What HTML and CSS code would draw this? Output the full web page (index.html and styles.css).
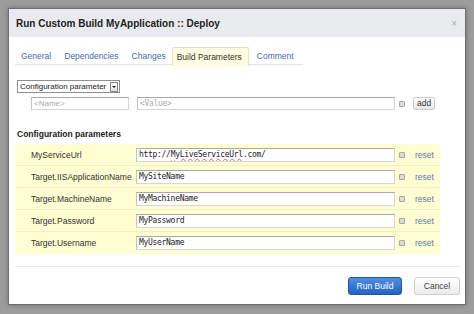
FILE: index.html
```html
<!DOCTYPE html>
<html lang="en">
  <head>
    <meta charset="UTF-8" />
    <title>Run Custom Build</title>
    <link rel="stylesheet" href="styles.css">
  </head>
  <body>
    <div class="backdrop">
      <div class="dialog">
        <div class="dialog-head">
          <span class="dialog-title">Run Custom Build MyApplication :: Deploy</span>
          <span class="close">&times;</span>
        </div>
        <div class="dialog-body">
          <ul class="tabs">
            <li>General</li>
            <li>Dependencies</li>
            <li>Changes</li>
            <li class="active">Build Parameters</li>
            <li>Comment</li>
          </ul>

          <div class="kind">
            <span class="select">Configuration parameter<span class="arrow"></span></span>
          </div>
          <div class="new-param">
            <span class="field name-field placeholder">&lt;Name&gt;</span>
            <span class="field value-field placeholder mono">&lt;Value&gt;</span>
            <span class="edit-icon"></span>
            <span class="btn-add">add</span>
          </div>

          <div class="section-title">Configuration parameters</div>
          <div class="params">
            <div class="param">
              <span class="param-name">MyServiceUrl</span>
              <span class="field value-field mono">http://<u>MyLiveServiceUrl</u>.com/</span>
              <span class="edit-icon"></span>
              <span class="reset">reset</span>
            </div>
            <div class="param">
              <span class="param-name">Target.IISApplicationName</span>
              <span class="field value-field mono">MySiteName</span>
              <span class="edit-icon"></span>
              <span class="reset">reset</span>
            </div>
            <div class="param">
              <span class="param-name">Target.MachineName</span>
              <span class="field value-field mono">MyMachineName</span>
              <span class="edit-icon"></span>
              <span class="reset">reset</span>
            </div>
            <div class="param">
              <span class="param-name">Target.Password</span>
              <span class="field value-field mono">MyPassword</span>
              <span class="edit-icon"></span>
              <span class="reset">reset</span>
            </div>
            <div class="param">
              <span class="param-name">Target.Username</span>
              <span class="field value-field mono">MyUserName</span>
              <span class="edit-icon"></span>
              <span class="reset">reset</span>
            </div>
          </div>
        </div>
        <div class="dialog-foot">
          <span class="btn btn-run">Run Build</span>
          <span class="btn btn-cancel">Cancel</span>
        </div>
      </div>
    </div>
  </body>
</html>
```

FILE: styles.css
```css
body {
  margin: 0;
  background: #9d9d9d;
  font-family: "Liberation Sans", Arial, sans-serif;
  font-size: 8.5px;
  color: #333;
}
.backdrop {
  height: 314px;
  padding: 8px;
  box-sizing: border-box;
}
.dialog {
  width: 458px;
  height: 297px;
  background: white;
  border: 1px solid #6f6f6f;
  box-sizing: border-box;
  box-shadow: 0 0 5px rgba(0, 0, 0, 0.3);
  display: flex;
  flex-direction: column;
}
.dialog-head {
  height: 28px;
  flex: none;
  background: #e9eaee;
  display: flex;
  align-items: center;
  justify-content: space-between;
  padding: 0 8px 0 7px;
}
.dialog-title {
  font-weight: bold;
  font-size: 10px;
  color: #222;
}
.close {
  color: #b0b0b0;
  font-size: 10px;
}
.dialog-body {
  padding: 10px 6px 0 6px;
  flex: 1;
}

/* tabs */
.tabs {
  list-style: none;
  margin: 0;
  padding: 0;
  display: flex;
  width: 288px;
  height: 17px;
  border-bottom: 1px solid #e2e2e2;
}
.tabs li {
  padding: 4px 6px 0 6px;
  margin-right: 1px;
  color: #4a6aa8;
  line-height: 11px;
  white-space: nowrap;
}
.tabs li.active {
  background: #fffce0;
  border: 1px solid #e6e3c2;
  border-bottom: none;
  border-radius: 2px 2px 0 0;
  color: #333;
  height: 14px;
  padding: 4px 6px 0 4px;
  margin: 0 2px 0 -1px;
}

/* new parameter */
.kind {
  margin-top: 15px;
  padding-left: 2px;
  height: 13px;
}
.select {
  display: inline-flex;
  align-items: center;
  height: 11px;
  border: 1px solid #8f8f8f;
  padding: 0 0 0 2px;
  font-size: 8px;
  color: #222;
  line-height: 11px;
}
.arrow {
  width: 6px;
  height: 8px;
  margin: 0 1px 0 4px;
  border: 1px solid #888;
  background: linear-gradient(#fff, #ddd);
  position: relative;
}
.arrow::after {
  content: "";
  position: absolute;
  left: 1px;
  top: 3px;
  border-left: 2px solid transparent;
  border-right: 2px solid transparent;
  border-top: 2px solid #222;
}

.new-param {
  display: flex;
  align-items: center;
  margin-top: 4px;
  padding-left: 16px;
}
.field {
  display: block;
  height: 11px;
  border: 1px solid #d6d6d6;
  border-top-color: #a9a9a9;
  border-left-color: #c4c4c4;
  background: white;
  font-size: 8px;
  line-height: 11px;
  padding: 0 2px;
  white-space: nowrap;
  overflow: hidden;
}
.mono {
  font-family: "DejaVu Sans Mono", "Liberation Mono", monospace;
  font-size: 8px;
  letter-spacing: -0.3px;
  color: #222;
}
.mono u {
  text-decoration: underline wavy #d66;
  text-decoration-thickness: 1px;
  text-underline-offset: 1px;
}
.placeholder {
  color: #aaa;
}
.name-field {
  width: 92px;
}
.value-field {
  width: 252px;
  margin-left: 8px;
}
.edit-icon {
  width: 4px;
  height: 4px;
  border: 1px solid #a5a5a5;
  border-radius: 1px;
  background: #dedede;
  margin-left: 4px;
}
.btn-add {
  margin-left: 8px;
  height: 11px;
  line-height: 11px;
  padding: 0 3px;
  border: 1px solid #ccc;
  border-radius: 2px;
  background: linear-gradient(#fff, #e6e6e6);
  font-size: 8.5px;
  color: #333;
}

/* existing parameters */
.section-title {
  margin-top: 18px;
  padding-left: 2px;
  font-weight: bold;
  font-size: 8.5px;
  line-height: 12px;
  color: #222;
}
.params {
  margin-top: 4px;
  width: 425px;
  background: #fffdd2;
}
.param {
  display: flex;
  align-items: center;
  height: 22px;
  border-bottom: 1px solid #f3efc6;
  box-sizing: border-box;
}
.param:last-child {
  border-bottom: none;
}
.param-name {
  width: 105px;
  padding-left: 16px;
  font-size: 8.5px;
  color: #333;
  white-space: nowrap;
}
.param .field {
  height: 12px;
  line-height: 12px;
}
.param .value-field {
  width: 253px;
  margin-left: 0;
}
.reset {
  margin-left: 10px;
  color: #5a7db0;
  font-size: 8.5px;
}

/* footer */
.dialog-foot {
  flex: none;
  margin: 0 5px 0 6px;
  border-top: 1px solid #e6e6e6;
  height: 37px;
  display: flex;
  justify-content: flex-end;
  align-items: center;
  padding-right: 0;
}
.btn {
  height: 18px;
  line-height: 16px;
  border-radius: 3px;
  font-size: 8.5px;
  text-align: center;
  box-sizing: border-box;
}
.btn-run {
  width: 54px;
  background: linear-gradient(#4f8ee0, #2463c2);
  border: 1px solid #1f55a8;
  color: white;
}
.btn-cancel {
  width: 46px;
  margin-left: 12px;
  background: linear-gradient(#fff, #ebebeb);
  border: 1px solid #cfcfcf;
  color: #444;
}
```
